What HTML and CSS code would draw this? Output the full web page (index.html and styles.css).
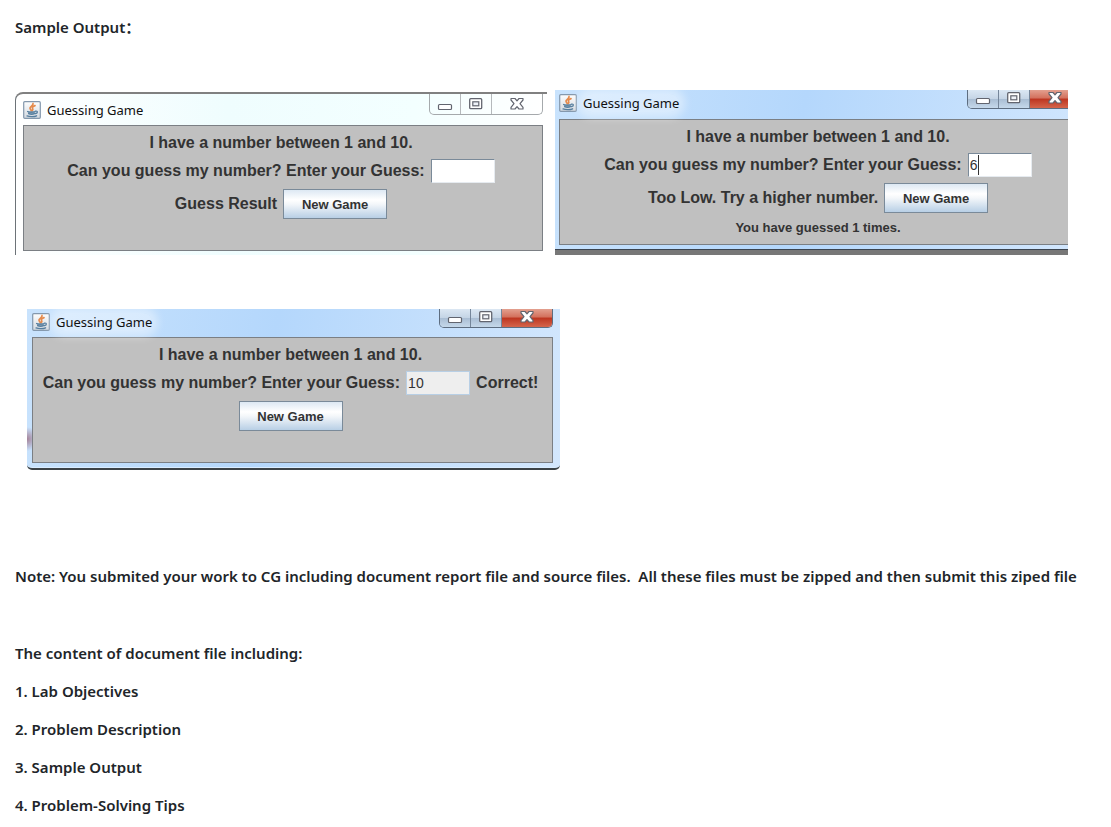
FILE: index.html
```
<!DOCTYPE html>
<html lang="en">
<head>
    <meta charset="UTF-8">
    <meta name="viewport" content="width=device-width, initial-scale=1">
    <title>Guessing Game Lab</title>
    <link rel="stylesheet" href="styles.css">
</head>
<body>
    <!-- Shared icons -->
    <svg class="icon-defs" xmlns="http://www.w3.org/2000/svg" aria-hidden="true">
        <defs>
            <linearGradient id="tile" x1="0" y1="0" x2="0" y2="1">
                <stop offset="0" stop-color="#fdfdfd"/>
                <stop offset="1" stop-color="#d3d9e0"/>
            </linearGradient>
        </defs>
        <symbol id="java" viewBox="0 0 18 18">
            <rect x="0.7" y="0.7" width="16.6" height="16.6" rx="1" fill="url(#tile)" stroke="#8498ad" stroke-width="1.2"/>
            <path d="M10 2.400c1 2-3.800 3.200-3 5.200.3.900 1.500 1.400 1.200 2.200M12 4.600c-1.900.8-3.200 1.700-2.400 2.900.5.900.6 1.400-.5 2.300" fill="none" stroke="#e58a4c" stroke-width="1.700" stroke-linecap="round"/>
            <path d="M4.500 10.400h7.700l-.6 2.600h-6.200z" fill="#7d9cb4"/>
            <path d="M4.600 10.500c1.800.7 5.600.7 7.600 0M5.600 12.700c1.600.7 4.500.7 6 0M12.400 10.200c2.600-.6 2.600 1.900.2 2.300M4 14.900c2.600 1 7.400 1 9.600-.1" fill="none" stroke="#567e9e" stroke-width="1.300" stroke-linecap="round"/>
        </symbol>
        <symbol id="minimize" viewBox="0 0 16 14">
            <rect x="1.500" y="7.500" width="13" height="5" rx="1" fill="#fff" stroke="#62656f" stroke-width="1.200"/>
        </symbol>
        <symbol id="maximize" viewBox="0 0 16 14">
            <rect x="1.700" y="1.700" width="12" height="10" rx="1" fill="#fff" stroke="#62656f" stroke-width="1.300"/>
            <rect x="4.800" y="4.800" width="6" height="4" fill="#eef2f8" stroke="#62656f" stroke-width="1.200"/>
        </symbol>
        <symbol id="close" viewBox="0 0 16 14">
            <path d="M2 1.500h4l2 2.300 2-2.300h4v1.500l-3 3.600 3 3.700v1.700h-4l-2-2.400-2 2.400h-4v-1.700l3-3.700-3-3.600z" fill="#fff" stroke="#62656f" stroke-width="1.200" stroke-linejoin="round"/>
        </symbol>
    </svg>

    <p>Sample Output：</p>

    <div class="samples">
        <div class="window inactive">
            <div class="titlebar">
                <svg class="app-icon"><use href="#java"/></svg>
                <span class="title">Guessing Game</span>
                <div class="controls">
                    <button class="control" aria-label="Minimize"><svg><use href="#minimize"/></svg></button>
                    <button class="control" aria-label="Maximize"><svg><use href="#maximize"/></svg></button>
                    <button class="control close" aria-label="Close"><svg><use href="#close"/></svg></button>
                </div>
            </div>
            <form class="panel">
                <div class="row intro">I have a number between 1 and 10.</div>
                <div class="row entry">
                    <label for="guess1">Can you guess my number? Enter your Guess:</label>
                    <input id="guess1" class="guess" type="text">
                </div>
                <div class="row">
                    <span>Guess Result</span>
                    <button class="new-game" type="button">New Game</button>
                </div>
            </form>
        </div>

        <div class="clip">
            <div class="window active">
                <div class="titlebar">
                    <svg class="app-icon"><use href="#java"/></svg>
                    <span class="title">Guessing Game</span>
                    <div class="controls">
                        <button class="control" aria-label="Minimize"><svg><use href="#minimize"/></svg></button>
                        <button class="control" aria-label="Maximize"><svg><use href="#maximize"/></svg></button>
                        <button class="control close" aria-label="Close"><svg><use href="#close"/></svg></button>
                    </div>
                </div>
                <form class="panel">
                    <div class="row intro">I have a number between 1 and 10.</div>
                    <div class="row entry">
                        <label for="guess2">Can you guess my number? Enter your Guess:</label>
                        <input id="guess2" class="guess editing" type="text" value="6">
                    </div>
                    <div class="row">
                        <span>Too Low. Try a higher number.</span>
                        <button class="new-game" type="button">New Game</button>
                    </div>
                    <div class="row count">You have guessed 1 times.</div>
                </form>
            </div>
        </div>
    </div>

    <div class="samples second">
        <div class="window active solved">
            <div class="titlebar">
                <svg class="app-icon"><use href="#java"/></svg>
                <span class="title">Guessing Game</span>
                <div class="controls">
                    <button class="control" aria-label="Minimize"><svg><use href="#minimize"/></svg></button>
                    <button class="control" aria-label="Maximize"><svg><use href="#maximize"/></svg></button>
                    <button class="control close" aria-label="Close"><svg><use href="#close"/></svg></button>
                </div>
            </div>
            <form class="panel">
                <div class="row intro">I have a number between 1 and 10.</div>
                <div class="row entry">
                    <label for="guess3">Can you guess my number? Enter your Guess:</label>
                    <input id="guess3" class="guess locked" type="text" value="10" readonly>
                    <span>Correct!</span>
                </div>
                <div class="row">
                    <button class="new-game" type="button">New Game</button>
                </div>
            </form>
        </div>
    </div>

    <p class="note">Note: You submited your work to CG including document report file and source files.&nbsp; All these files must be zipped and then submit this ziped file</p>

    <p>The content of document file including:</p>
    <p>1. Lab Objectives</p>
    <p>2. Problem Description</p>
    <p>3. Sample Output</p>
    <p>4. Problem-Solving Tips</p>
</body>
</html>
```
FILE: styles.css
```
body {
    margin: 0;
    padding: 16px 15px 0;
    background-color: #fff;
    color: #212529;
    font-family: 'Noto Sans', 'Noto Sans CJK SC', sans-serif;
    font-size: 15px;
    font-weight: 600;
    line-height: 22px;
}

p {
    margin: 0 0 16px;
}

.note {
    margin: 95px 0 55px;
}

.icon-defs {
    position: absolute;
    width: 0;
    height: 0;
}

.samples {
    display: flex;
    align-items: flex-end;
    gap: 8px;
    margin-top: 52px;
}

.samples.second {
    margin-top: 54px;
    padding-left: 12px;
}

/* Window frames */
.window {
    box-sizing: border-box;
    flex: 0 1 532px;
}

.inactive {
    padding: 0 4px 4px 7px;
    border-top: 2px solid #808080;
    border-left: 1px solid #6d7378;
    border-radius: 8px 0 0 0;
    background: linear-gradient(90deg, #fff, #effdfe 40%, #f3ffff 75%, #fff);
}

.active {
    padding: 0 7px 5px 4px;
    border-bottom: 5px solid #777;
    background: linear-gradient(100deg, #c9e3fd, #b4d7fc 45%, #d3e7fd);
    box-shadow: inset 0 -1px #3b4450;
}

.solved {
    flex-basis: 533px;
    padding: 0 7px 5px 5px;
    border-bottom: 2px solid #3b4247;
    border-radius: 0 0 5px 5px;
    background:
        radial-gradient(circle at 0 130px, rgba(150, 90, 110, 0.7), transparent 12px),
        linear-gradient(100deg, #c9e3fd, #b4d7fc 45%, #d3e7fd);
    box-shadow: inset 0 -1px #d9ecff;
}

/* The second window runs past its visible area */
.clip {
    flex: 0 1 513px;
    overflow: hidden;
}

.clip .window {
    width: calc(100% + 20px);
}

.titlebar {
    box-sizing: border-box;
    display: flex;
    align-items: center;
    gap: 6px;
    height: 31px;
}

.active .titlebar {
    height: 29px;
    padding-bottom: 3px;
}

.solved .titlebar {
    height: 28px;
}

.app-icon {
    width: 18px;
    height: 18px;
}

.title {
    color: #111;
    font-family: 'Noto Sans', sans-serif;
    font-size: 13px;
    font-weight: 400;
    line-height: 18px;
}

.active .title {
    border-radius: 9px;
    background-color: rgba(255, 255, 255, 0.4);
    box-shadow: 0 0 9px 6px rgba(255, 255, 255, 0.4);
}

.controls {
    display: flex;
    align-self: flex-start;
    margin-left: auto;
    border: 1px solid #a5a9ac;
    border-top: 0;
    border-radius: 0 0 5px 5px;
    overflow: hidden;
}

.control {
    display: flex;
    align-items: center;
    justify-content: center;
    width: 31px;
    height: 20px;
    padding: 0;
    border: 0;
    border-right: 1px solid #b5b9bc;
    background: none;
}

.control svg {
    width: 16px;
    height: 14px;
}

.close {
    width: 50px;
    border-right: 0;
}

.active .controls {
    border-color: #5d6d80;
}

.active .control {
    height: 18px;
    padding-bottom: 2px;
    border-color: #75869a;
    background: linear-gradient(#dbe7f3, #c4d4e5 50%, #a9bdd3 50%, #c5d8ea);
}

.active .close {
    background: linear-gradient(#e3a08f, #d3705c 45%, #bd3520 50%, #d5654b);
}

/* Game panel */
.panel {
    box-sizing: border-box;
    display: flex;
    flex-direction: column;
    gap: 6px;
    min-height: 126px;
    padding: 7px 4px 7px 0;
    border: 1px solid #7b7f84;
    background-color: #c0c0c0;
    color: #333;
    font-family: 'Liberation Sans', Arial, sans-serif;
    font-size: 16px;
    font-weight: 700;
    line-height: 20px;
    white-space: nowrap;
}

.row {
    display: flex;
    align-items: center;
    justify-content: center;
    gap: 6px;
}

.count {
    font-size: 13px;
    line-height: 18px;
}

.guess {
    box-sizing: border-box;
    width: 64px;
    height: 24px;
    padding: 0 1px;
    border: 1px solid #7a8a99;
    border-right-color: #e6ebf0;
    border-bottom-color: #e6ebf0;
    background-color: #fff;
    color: #333;
    font-family: 'Liberation Sans', Arial, sans-serif;
    font-size: 14px;
}

/* Text cursor after the digit */
.editing {
    background-image: linear-gradient(#333, #333);
    background-position: 9px 1px;
    background-repeat: no-repeat;
    background-size: 1px 20px;
}

.locked {
    border-color: #b8cfe5;
    background-color: #eee;
}

.new-game {
    width: 104px;
    height: 30px;
    padding: 0;
    border: 1px solid #7a8a99;
    background: linear-gradient(#dde8f3, #fff 35%, #f4f7fa 50%, #b8cfe5);
    color: #333;
    font-family: 'Liberation Sans', Arial, sans-serif;
    font-size: 13px;
    font-weight: 700;
}
```
